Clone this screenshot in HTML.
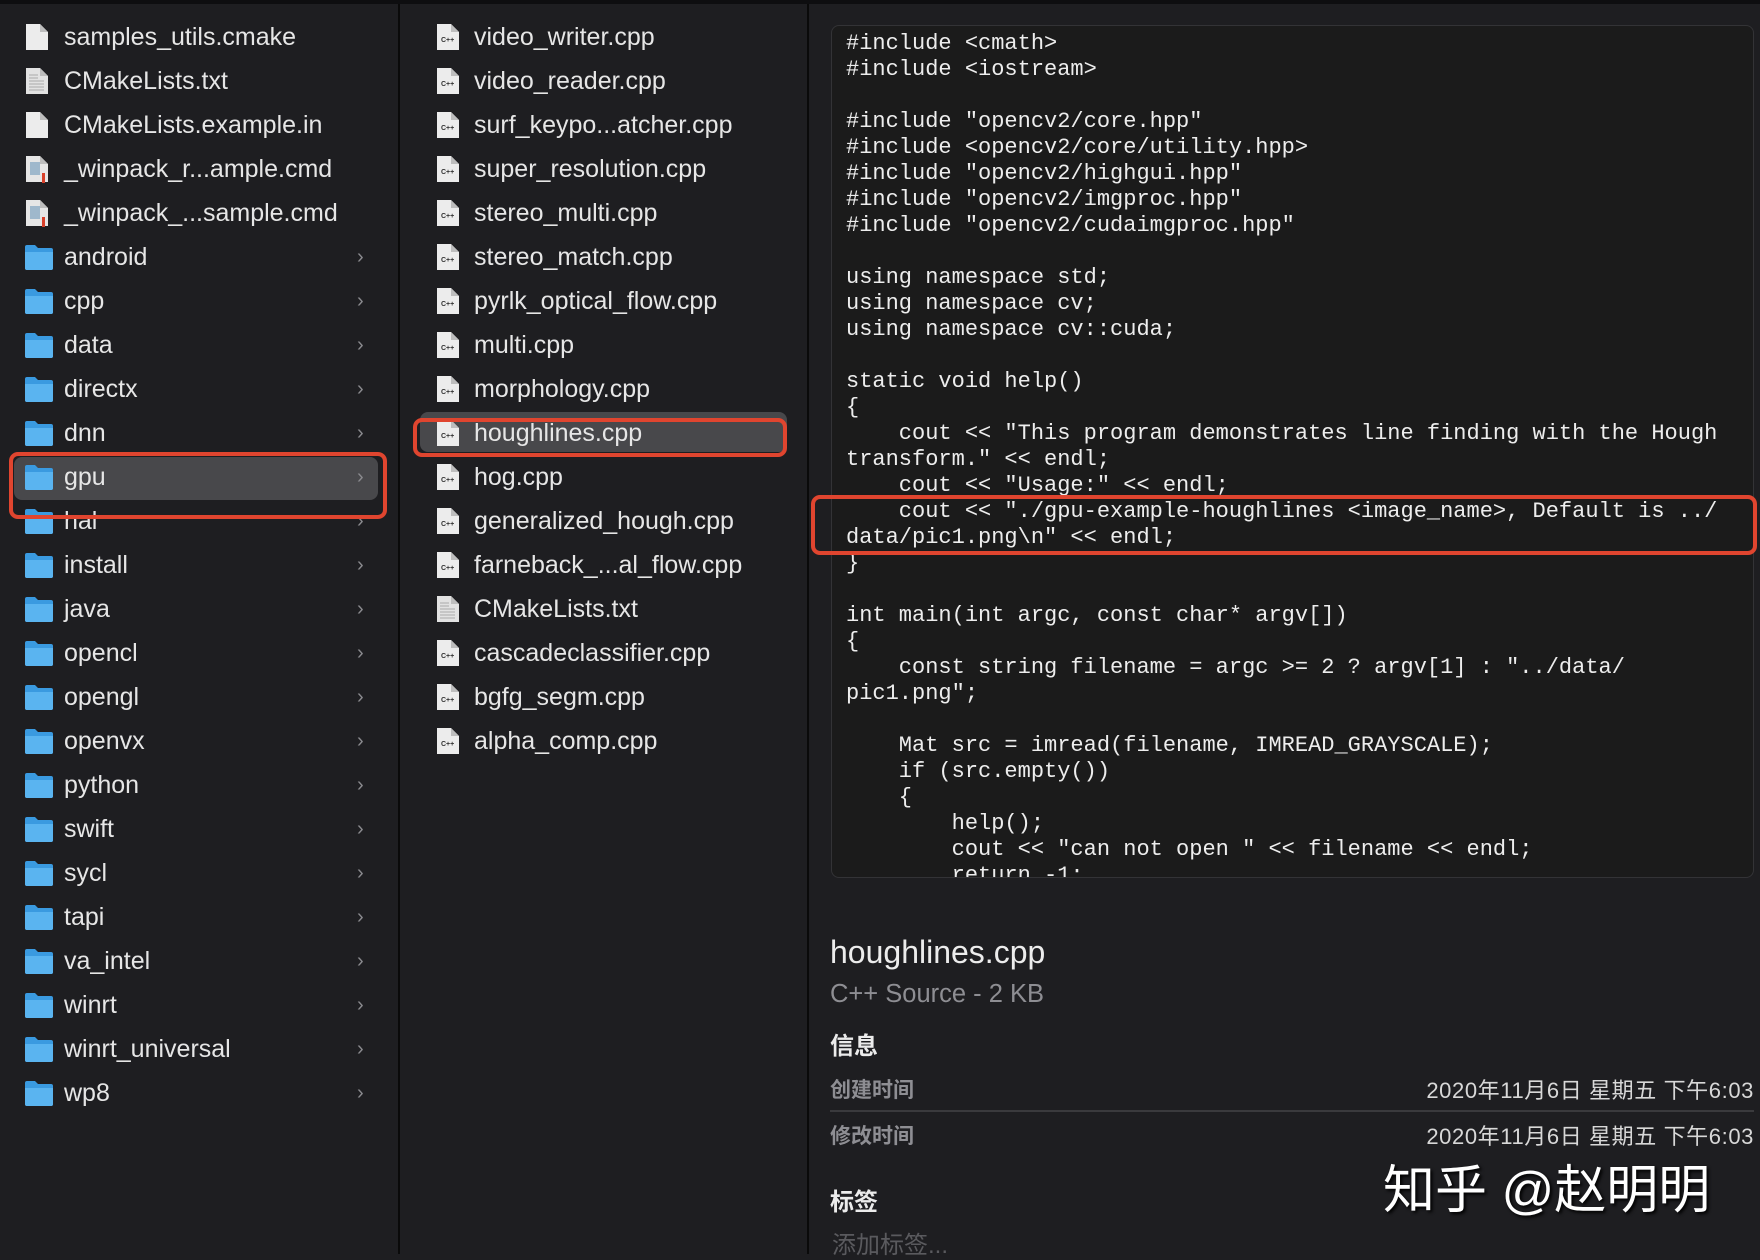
<!DOCTYPE html>
<html><head><meta charset="utf-8">
<style>
*{margin:0;padding:0;box-sizing:border-box}
html,body{width:1760px;height:1254px;overflow:hidden;background:#1e1e21;font-family:"Liberation Sans","Noto Sans CJK SC",sans-serif;color:#e6e6e6}
.top{position:absolute;left:0;top:0;width:1760px;height:4px;background:#0e0e10}
.div{position:absolute;top:4px;width:2px;height:1250px;background:#0a0a0a}
.row{position:absolute;height:44px;line-height:44px;font-size:25px;white-space:nowrap}
.row svg{position:absolute;top:8px}
.chev{position:absolute;left:357px;color:#8a8a8e;font-size:20px}
.sel{position:absolute;background:#48484b;border-radius:8px}
.red{position:absolute;border:4px solid #e0452f;border-radius:9px}
.code{position:absolute;left:831px;top:25px;width:923px;height:853px;background:#1b1b1b;border:1px solid #333336;border-radius:8px;overflow:hidden}
.code pre{position:absolute;left:14px;top:5px;font-family:"Liberation Mono",monospace;font-size:22px;line-height:26px;color:#ededed}
.t{position:absolute;white-space:nowrap}
</style></head><body>
<div class="top"></div>
<div class="div" style="left:398px"></div>
<div class="div" style="left:807px"></div>

<div class="sel" style="left:14px;top:457px;width:364px;height:43px"></div>
<div class="sel" style="left:420px;top:412px;width:367px;height:40px"></div>

<div id="c1"></div>
<div id="c2"></div>

<div class="red" style="left:9px;top:452px;width:378px;height:67px"></div>
<div class="red" style="left:413px;top:418px;width:374px;height:39px"></div>

<div class="code"><pre>#include &lt;cmath&gt;
#include &lt;iostream&gt;

#include "opencv2/core.hpp"
#include &lt;opencv2/core/utility.hpp&gt;
#include "opencv2/highgui.hpp"
#include "opencv2/imgproc.hpp"
#include "opencv2/cudaimgproc.hpp"

using namespace std;
using namespace cv;
using namespace cv::cuda;

static void help()
{
    cout &lt;&lt; "This program demonstrates line finding with the Hough
transform." &lt;&lt; endl;
    cout &lt;&lt; "Usage:" &lt;&lt; endl;
    cout &lt;&lt; "./gpu-example-houghlines &lt;image_name&gt;, Default is ../
data/pic1.png\n" &lt;&lt; endl;
}

int main(int argc, const char* argv[])
{
    const string filename = argc &gt;= 2 ? argv[1] : "../data/
pic1.png";

    Mat src = imread(filename, IMREAD_GRAYSCALE);
    if (src.empty())
    {
        help();
        cout &lt;&lt; "can not open " &lt;&lt; filename &lt;&lt; endl;
        return -1;</pre></div>
<div class="red" style="left:811px;top:495px;width:946px;height:60px"></div>

<div class="t" style="left:830px;top:934px;font-size:32px;color:#ececec">houghlines.cpp</div>
<div class="t" style="left:830px;top:980px;font-size:25.5px;color:#8e8e93">C++ Source - 2 KB</div>
<div class="t" style="left:830px;top:1026px;font-size:24px;font-weight:bold;color:#ececec">信息</div>
<div class="t" style="left:830px;top:1074px;font-size:21px;font-weight:bold;color:#8e8e93">创建时间</div>
<div class="t" style="right:6px;top:1073px;font-size:22px;letter-spacing:0.6px;color:#d8d8d8">2020年11月6日 星期五 下午6:03</div>
<div style="position:absolute;left:830px;top:1110px;width:924px;height:2px;background:#3a3a3d"></div>
<div class="t" style="left:830px;top:1120px;font-size:21px;font-weight:bold;color:#8e8e93">修改时间</div>
<div class="t" style="right:6px;top:1119px;font-size:22px;letter-spacing:0.6px;color:#d8d8d8">2020年11月6日 星期五 下午6:03</div>
<div class="t" style="left:830px;top:1182px;font-size:24px;font-weight:bold;color:#ececec">标签</div>
<div class="t" style="left:832px;top:1225px;font-size:24px;color:#5a5a5e">添加标签...</div>
<div class="t" style="left:1383px;top:1148px;font-size:52px;color:#fff;text-shadow:2px 2px 3px #000">知乎 @赵明明</div>

<script>
var file='<svg width="26" height="28" viewBox="0 0 26 28"><path d="M2 1h14l8 8v18H2z" fill="#ececec"/><path d="M16 1v8h8" fill="#bdbdbd"/></svg>';
var txt='<svg width="26" height="28" viewBox="0 0 26 28"><path d="M2 1h14l8 8v18H2z" fill="#e2e2e2"/><path d="M16 1v8h8" fill="#bdbdbd"/><g stroke="#aaa" stroke-width="1"><path d="M5 8h9M5 11h9M5 14h15M5 17h15M5 20h15M5 23h15"/></g></svg>';
var cmd='<svg width="26" height="28" viewBox="0 0 26 28"><path d="M2 1h14l8 8v18H2z" fill="#e6e6e6"/><path d="M16 1v8h8" fill="#bdbdbd"/><rect x="6" y="7" width="10" height="13" fill="#9fb8cc"/><rect x="18" y="18" width="3" height="10" fill="#d8402a"/></svg>';
var fold='<svg width="30" height="28" viewBox="0 0 30 28"><path d="M1 4q0-2 2-2h8l3 3h13q2 0 2 2v18q0 2-2 2H3q-2 0-2-2z" fill="#3a9ae0"/><path d="M1 9h28v16q0 2-2 2H3q-2 0-2-2z" fill="#5ab4f0"/></svg>';
var cpp='<svg width="26" height="28" viewBox="0 0 26 28"><path d="M2 1h14l8 8v18H2z" fill="#ececec"/><path d="M16 1v8h8" fill="#bdbdbd"/><text x="6" y="19" font-size="7" font-family="Liberation Sans" fill="#333" font-weight="bold">C++</text></svg>';
var c1=[['samples_utils.cmake',file],['CMakeLists.txt',txt],['CMakeLists.example.in',file],['_winpack_r...ample.cmd',cmd],['_winpack_...sample.cmd',cmd]];
['android','cpp','data','directx','dnn','gpu','hal','install','java','opencl','opengl','openvx','python','swift','sycl','tapi','va_intel','winrt','winrt_universal','wp8'].forEach(function(n){c1.push([n,fold,1])});
var h='';
c1.forEach(function(r,i){var y=15+44*i;h+='<div class="row" style="left:0;top:'+y+'px;width:398px"><span style="position:absolute;left:24px;top:0">'+r[1]+'</span><span style="position:absolute;left:64px">'+r[0]+'</span>'+(r[2]?'<span class="chev">&#x203A;</span>':'')+'</div>';});
document.getElementById('c1').innerHTML=h;
var c2=['video_writer.cpp','video_reader.cpp','surf_keypo...atcher.cpp','super_resolution.cpp','stereo_multi.cpp','stereo_match.cpp','pyrlk_optical_flow.cpp','multi.cpp','morphology.cpp','houghlines.cpp','hog.cpp','generalized_hough.cpp','farneback_...al_flow.cpp','CMakeLists.txt','cascadeclassifier.cpp','bgfg_segm.cpp','alpha_comp.cpp'];
h='';
c2.forEach(function(n,i){var y=15+44*i;h+='<div class="row" style="left:0;top:'+y+'px;width:800px"><span style="position:absolute;left:435px;top:0">'+(n=='CMakeLists.txt'?txt:cpp)+'</span><span style="position:absolute;left:474px">'+n+'</span></div>';});
document.getElementById('c2').innerHTML=h;
</script>
</body></html>
